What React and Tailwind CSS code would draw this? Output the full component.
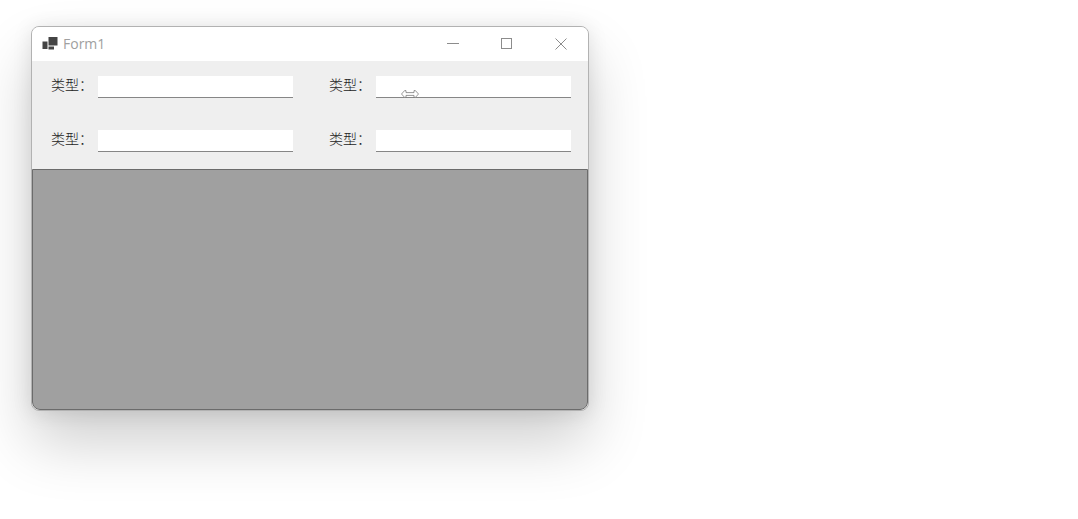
import { useState } from 'react';

const campos = ['tipo-1', 'tipo-2', 'tipo-3', 'tipo-4'];

function AppIcon() {
  return (
    <svg width="16" height="14" viewBox="0 0 16 14" fill="#444444" aria-hidden="true">
      <rect x="6.5" y="0" width="9" height="8.5" />
      <rect x="0.5" y="4.5" width="5" height="7.5" />
      <rect x="6.5" y="9.5" width="5.5" height="3" />
    </svg>
  );
}

function ResizeCursor() {
  return (
    <svg width="18" height="8" viewBox="0 0 18 8" fill="#ffffff" stroke="#6b6b6b" strokeWidth="0.7"
      strokeLinejoin="round" aria-hidden="true">
      <path d="M0.5 4 L3.6 0.6 H5 V2.6 H13 V0.6 H14.4 L17.5 4 L14.4 7.4 H13 V5.4 H5 V7.4 H3.6 Z" />
    </svg>
  );
}

function CaptionButton({ label, children }) {
  return (
    <button type="button" aria-label={label}
      className="flex w-[54px] items-center justify-center hover:bg-gray-200">
      <svg width="12" height="12" viewBox="0 0 12 12" fill="none" stroke="#8c8c8c" aria-hidden="true">
        {children}
      </svg>
    </button>
  );
}

export default function App() {
  const [valores, setValores] = useState({});

  return (
    <div className="min-h-screen bg-white px-[31px] pt-[26px] pb-27 font-['Noto_Sans','Noto_Sans_CJK_SC',sans-serif]">
      <main className="relative w-full max-w-[558px] overflow-hidden rounded-lg border border-[#b2b2b2] bg-[#efefef] shadow-[0_32px_60px_rgba(0,0,0,0.19),0_2px_20px_rgba(0,0,0,0.10)]">

        {/* Title bar */}
        <header className="flex h-[34px] bg-white">
          <div className="flex flex-1 items-center gap-1 pl-[10px]">
            <AppIcon />
            <h1 className="pl-px font-['Open_Sans',sans-serif] text-sm text-[#a0a0a0]">Form1</h1>
          </div>
          <CaptionButton label="Minimize">
            <path d="M0 5.5H12" />
          </CaptionButton>
          <CaptionButton label="Maximize">
            <rect x="0.5" y="0.5" width="10" height="10" />
          </CaptionButton>
          <CaptionButton label="Close">
            <path d="M0.5 0.5L11.5 11.5M11.5 0.5L0.5 11.5" />
          </CaptionButton>
        </header>

        {/* Fields */}
        <form className="grid grid-cols-2">
          {campos.map(id => (
            <div key={id} className="flex h-[54px] items-start pt-[15px] pr-[17px] pl-[19px]">
              <label htmlFor={id}
                className="w-[47px] shrink-0 font-['Noto_Sans_CJK_SC',sans-serif] text-sm leading-4 font-light text-[#222222]">
                类型：
              </label>
              <input
                id={id}
                type="text"
                value={valores[id] || ''}
                onChange={e => setValores({ ...valores, [id]: e.target.value })}
                className="h-[22px] min-w-0 flex-1 border-b border-[#868686] bg-white px-1 text-sm outline-none"
              />
            </div>
          ))}
        </form>

        {/* Empty data grid */}
        <section className="h-[241px] rounded-b-lg border border-[#6b6b6b] bg-[#a0a0a0]" />

        {/* Mouse pointer */}
        <div className="pointer-events-none absolute top-[63px] left-[369px]">
          <ResizeCursor />
        </div>
      </main>
    </div>
  );
}
